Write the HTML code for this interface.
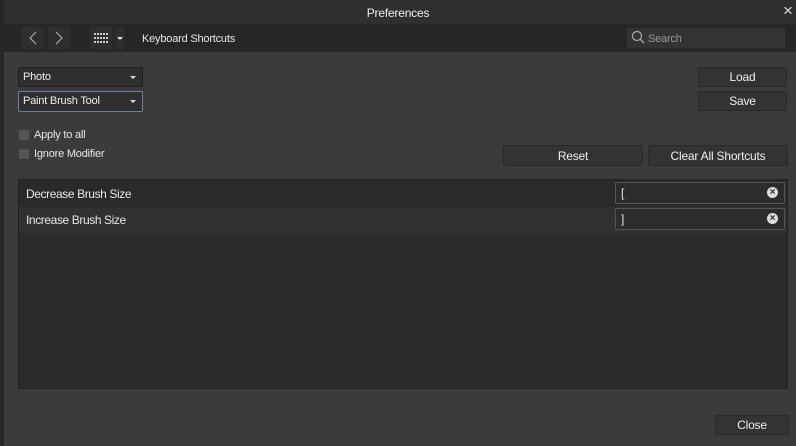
<!DOCTYPE html><html><head><style>
*{box-sizing:border-box;margin:0;padding:0}
body{width:796px;height:446px;background:#3b3b3b;font-family:"Liberation Sans",sans-serif;color:#e6e6e6;font-size:12px;position:relative;overflow:hidden;letter-spacing:-0.2px}
.a{position:absolute}
.btn{position:absolute;background:#333;border:1px solid #2a2a2a;border-radius:2px;text-align:center;font-size:12px;line-height:20px;color:#eee}
.dd{position:absolute;background:#2f2f2f;border:1px solid #1e1e1e;border-radius:2px;font-size:11px;line-height:19px;padding-left:4px;color:#eee}
.dd:after{content:"";position:absolute;right:6px;top:8px;border-left:3px solid transparent;border-right:3px solid transparent;border-top:3px solid #ddd}
.cb{position:absolute;width:10px;height:10px;background:#555;border-radius:2px}
.fld{position:absolute;left:615px;width:170px;height:22px;background:#2c2c2c;border:1px solid #555;border-radius:2px;font-size:12px;line-height:21px;padding-left:5px}
.x{position:absolute;right:6px;top:4px;width:11px;height:11px;border-radius:50%;background:#ddd;color:#2c2c2c;font-size:10px;line-height:11px;text-align:center;font-weight:bold}
</style></head><body>
<div class="a" style="left:0;top:0;width:4px;height:446px;background:#272727"></div>
<div class="a" style="left:4px;top:0;width:792px;height:24px;background:#2f2f2f"></div>
<div class="a" style="left:0;top:6px;width:796px;text-align:center;font-size:12px;color:#eee">Preferences</div>
<div class="a" style="left:783px;top:1px;font-size:17px;color:#ddd">×</div>
<div class="a" style="left:4px;top:24px;width:792px;height:28px;background:#262626"></div>
<div class="btn" style="left:21px;top:26px;width:24px;height:24px;background:#2e2e2e"><svg width="22" height="22"><path d="M14 5L8 11L14 17" stroke="#bbb" fill="none"/></svg></div>
<div class="btn" style="left:47px;top:26px;width:24px;height:24px;background:#2e2e2e"><svg width="22" height="22"><path d="M8 5L14 11L8 17" stroke="#bbb" fill="none"/></svg></div>
<div class="btn" style="left:89px;top:26px;width:24px;height:24px;background:#2e2e2e"><svg width="22" height="22" fill="#ccc"><g><rect x="4" y="6" width="2" height="2"/><rect x="7" y="6" width="2" height="2"/><rect x="10" y="6" width="2" height="2"/><rect x="13" y="6" width="2" height="2"/><rect x="16" y="6" width="2" height="2"/><rect x="4" y="10" width="2" height="2"/><rect x="7" y="10" width="2" height="2"/><rect x="10" y="10" width="2" height="2"/><rect x="13" y="10" width="2" height="2"/><rect x="16" y="10" width="2" height="2"/><rect x="4" y="14" width="2" height="2"/><rect x="7" y="14" width="2" height="2"/><rect x="10" y="14" width="2" height="2"/><rect x="13" y="14" width="2" height="2"/><rect x="16" y="14" width="2" height="2"/></g></svg></div>
<div class="btn" style="left:115px;top:26px;width:10px;height:24px;background:#2e2e2e"><svg width="8" height="22"><path d="M1 10L7 10L4 13Z" fill="#ddd"/></svg></div>
<div class="a" style="left:142px;top:33px;font-size:11px">Keyboard Shortcuts</div>
<div class="a" style="left:627px;top:28px;width:158px;height:20px;background:#333"><svg class="a" style="left:4px;top:2px" width="14" height="14"><circle cx="6" cy="6" r="4.5" stroke="#aaa" fill="none" stroke-width="1.2"/><path d="M9.5 9.5L13 13" stroke="#aaa" stroke-width="1.3"/></svg><span class="a" style="left:21px;top:5px;color:#999;font-size:11px">Search</span></div>
<div class="dd" style="left:18px;top:67px;width:125px;height:20px">Photo</div>
<div class="dd" style="left:18px;top:91px;width:125px;height:21px;border-color:#6a7fa8">Paint Brush Tool</div>
<div class="cb" style="left:19px;top:130px"></div><div class="a" style="left:34px;top:129px;font-size:11px">Apply to all</div>
<div class="cb" style="left:19px;top:149px"></div><div class="a" style="left:34px;top:148px;font-size:11px">Ignore Modifier</div>
<div class="btn" style="left:698px;top:67px;width:89px;height:20px;line-height:19px">Load</div>
<div class="btn" style="left:698px;top:91px;width:89px;height:20px;line-height:19px">Save</div>
<div class="btn" style="left:503px;top:145px;width:140px;height:21px">Reset</div>
<div class="btn" style="left:648px;top:145px;width:140px;height:21px">Clear All Shortcuts</div>
<div class="a" style="left:18px;top:179px;width:770px;height:210px;background:#2b2b2b;border:1px solid #222"></div>
<div class="a" style="left:19px;top:181px;width:768px;height:26px;background:#2a2a2a"></div>
<div class="a" style="left:19px;top:207px;width:768px;height:26px;background:#313131"></div>
<div class="a" style="left:26px;top:187px;letter-spacing:-0.4px">Decrease Brush Size</div>
<div class="a" style="left:26px;top:213px;letter-spacing:-0.4px">Increase Brush Size</div>
<div class="fld" style="top:182px">[<div class="x">×</div></div>
<div class="fld" style="top:208px">]<div class="x">×</div></div>
<div class="btn" style="left:715px;top:415px;width:74px;height:20px;line-height:19px">Close</div>
</body></html>
